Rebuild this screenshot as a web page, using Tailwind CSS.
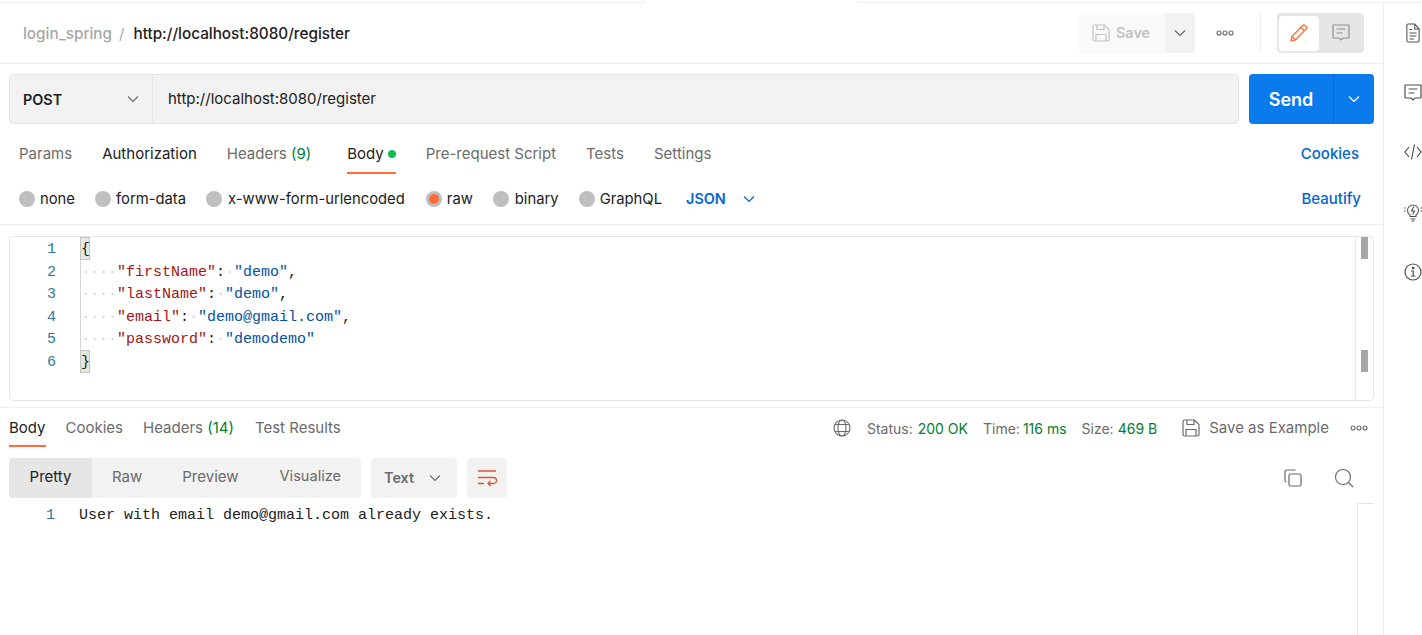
<!DOCTYPE html>
<html lang="en">
<head>
  <meta charset="UTF-8"/>
  <meta name="viewport" content="width=device-width, initial-scale=1.0"/>
  <title>login_spring | Postman</title>
  <script src="https://cdn.jsdelivr.net/npm/@tailwindcss/browser@4"></script>
</head>
<body class="h-[635px] w-[1422px] overflow-hidden bg-white font-['Inter',sans-serif] text-[15px] text-[#6b6b6b]">
  <!-- tab strip remnant -->
  <div class="flex h-[3px]">
    <div class="w-[643px] border-b border-[#ededed]"></div>
    <div class="w-[216px] border-x border-[#ededed]"></div>
    <div class="flex-1 border-b border-[#ededed]"></div>
  </div>

  <div class="flex h-[632px]">
    <main class="flex w-[1383px] flex-col">
      <!-- title row -->
      <header class="flex h-[61px] items-center border-b border-[#ededed] pl-[23px] pr-[19px]">
        <span class="pt-[2px] text-[15.300px] font-medium text-[#a6a6a6]">login_spring</span>
        <span class="ml-[7px] pt-[2px] text-[#a6a6a6]">/</span>
        <span class="ml-[9px] pt-[2px] text-[15.300px] font-medium text-[#212121]">http://localhost:8080/register</span>
        <div class="ml-auto flex h-10 items-center">
          <button class="flex h-10 w-[86px] items-center gap-[6px] rounded-l-[4px] bg-[#f9f9f9] pl-[13px] text-[14.400px] font-semibold text-[#c2c2c2]">
            <svg class="h-[18px] w-[18px]" viewBox="0 0 18 18" fill="none" stroke="#c2c2c2" stroke-width="1.200"><path d="M1 2.500A1.500 1.500 0 0 1 2.500 1h10L17 5.500v10a1.500 1.500 0 0 1-1.500 1.500h-13A1.500 1.500 0 0 1 1 15.500z"/><path d="M5 1v4.500h7V1M4 17v-6.500h10V17"/></svg>
            Save
          </button>
          <button class="flex h-10 w-[30px] items-center justify-center rounded-r-[4px] bg-[#f2f2f2]">
            <svg class="h-3 w-3" viewBox="0 0 12 12" fill="none" stroke="#6b6b6b" stroke-width="1.200"><path d="M1 3.500l5 5 5-5"/></svg>
          </button>
          <svg class="ml-[21px] h-[8px] w-[18px]" viewBox="0 0 18 8" fill="none" stroke="#6b6b6b" stroke-width="1.100"><circle cx="3" cy="4" r="2"/><circle cx="9" cy="4" r="2"/><circle cx="15" cy="4" r="2"/></svg>
          <div class="ml-[26px] h-10 w-px bg-[#ededed]"></div>
          <div class="ml-[16px] flex h-10 w-[87px] items-center rounded-[4px] bg-[#e6e6e6] pl-[2px]">
            <div class="flex h-[35px] w-[40px] items-center justify-center rounded-[4px] bg-white">
              <svg class="h-[18px] w-[18px]" viewBox="0 0 18 18" fill="none" stroke="#ff6c37" stroke-width="1.300"><path d="M1 17l1-4.500L12.800 1.500a1.500 1.500 0 0 1 2.200 0l1.200 1.200a1.500 1.500 0 0 1 0 2.100L5.500 16z"/><path d="M11 3.500l3.500 3.500M2 12.500l3.500 3.500"/></svg>
            </div>
            <div class="flex w-[43px] justify-center">
              <svg class="h-[18px] w-[18px]" viewBox="0 0 18 18" fill="none" stroke="#8f8f8f" stroke-width="1.200"><path d="M1.500 1h15a.5.5 0 0 1 .5.500v12a.5.5 0 0 1-.5.500H11l-2 2-2-2H1.500a.5.5 0 0 1-.5-.5v-12a.5.5 0 0 1 .5-.5z"/><path d="M4.500 5h9M4.500 9h6"/></svg>
            </div>
          </div>
        </div>
      </header>

      <!-- url bar -->
      <div class="mt-[10px] flex h-[50px] pl-[9px] pr-[9px]">
        <div class="flex flex-1 rounded-[4px] border border-[#e6e6e6] bg-[#f2f2f2]">
          <div class="flex w-[143px] items-center justify-between border-r border-[#e6e6e6] pl-[13px] pr-[13px]">
            <span class="pt-[1px] text-[14.400px] font-semibold text-[#212121]">POST</span>
            <svg class="h-3 w-3" viewBox="0 0 12 12" fill="none" stroke="#6b6b6b" stroke-width="1.100"><path d="M1 3.500l5 5 5-5"/></svg>
          </div>
          <div class="flex items-center pl-[15px] text-[#212121]">http://localhost:8080/register</div>
        </div>
        <div class="ml-[10px] flex w-[125px] rounded-[4px] bg-[#097bed] text-white">
          <div class="flex w-[85px] items-center justify-center border-r border-[#0265d2] text-[18px] font-semibold">Send</div>
          <div class="flex flex-1 items-center justify-center">
            <svg class="h-3 w-3" viewBox="0 0 12 12" fill="none" stroke="#ffffff" stroke-width="1.200"><path d="M1 3.500l5 5 5-5"/></svg>
          </div>
        </div>
      </div>

      <!-- request tabs -->
      <nav class="mt-[13px] flex h-[37px] gap-[30px] pl-[19px] pr-[24px]">
        <span class="pt-[6px]">Params</span>
        <span class="pt-[6px] text-[#212121]">Authorization</span>
        <span class="pt-[6px]">Headers <span class="text-[#007f31]">(9)</span></span>
        <span class="ml-[6px] flex items-start gap-[4px] border-b-2 border-[#ff6c37] pt-[6px] text-[#212121]">Body <span class="mt-[7px] h-2 w-2 rounded-full bg-[#0cbb52]"></span></span>
        <span class="pt-[6px]">Pre-request Script</span>
        <span class="pt-[6px]">Tests</span>
        <span class="pt-[6px]">Settings</span>
        <span class="ml-auto pt-[6px] font-medium text-[#0265d2]">Cookies</span>
      </nav>

      <!-- body type -->
      <div class="flex h-[51px] items-center border-b border-[#ededed] pl-[19px] pr-[22px] text-[14.800px] text-[#212121]">
        <span class="h-4 w-4 rounded-full bg-[#bfbfbf]"></span><span class="ml-[5px] pt-[1px]">none</span>
        <span class="ml-[20px] h-4 w-4 rounded-full bg-[#bfbfbf]"></span><span class="ml-[5px] pt-[1px]">form-data</span>
        <span class="ml-[20px] h-4 w-4 rounded-full bg-[#bfbfbf]"></span><span class="ml-[6px] pt-[1px]">x-www-form-urlencoded</span>
        <span class="ml-[21px] h-4 w-4 rounded-full border-[3px] border-[#bfbfbf] bg-[#ff6c37]"></span><span class="ml-[5px] pt-[1px]">raw</span>
        <span class="ml-[20px] h-4 w-4 rounded-full bg-[#bfbfbf]"></span><span class="ml-[6px] pt-[1px]">binary</span>
        <span class="ml-[20px] h-4 w-4 rounded-full bg-[#bfbfbf]"></span><span class="ml-[5px] pt-[1px]">GraphQL</span>
        <span class="ml-[24px] text-[14.400px] font-semibold text-[#0265d2]">JSON</span>
        <svg class="ml-[17px] h-3 w-3" viewBox="0 0 12 12" fill="none" stroke="#0265d2" stroke-width="1.200"><path d="M1 3.500l5 5 5-5"/></svg>
        <span class="ml-auto text-[15px] font-medium text-[#0265d2]">Beautify</span>
      </div>

      <!-- editor -->
      <div class="mt-[11px] mx-[9px] flex h-[165px] rounded-[4px] border border-[#e6e6e6] font-['Liberation_Mono',monospace] text-[15px] leading-[26.500px]">
        <div class="w-[46px] shrink-0 text-right text-[#2b7a9c]">
          <div class="h-[22.500px]">1</div><div class="h-[22.500px]">2</div><div class="h-[22.500px]">3</div><div class="h-[22.500px]">4</div><div class="h-[22.500px]">5</div><div class="h-[22.500px]">6</div>
        </div>
        <div class="ml-[24px] h-[135px] w-[1275px] border-l border-[#d3d3d3] text-[#212121]">
          <div class="h-[22.500px]"><span class="-ml-px inline-block h-[23px] w-[10px] border border-[#c5c5c5] bg-[#e3e8e0] align-top leading-[24px]">{</span></div>
          <div class="h-[22.500px] whitespace-pre"><span class="text-[#d3d3d3]">····</span><span class="text-[#a31515]">"firstName"</span>:<span class="text-[#d3d3d3]">·</span><span class="text-[#0451a5]">"demo"</span>,</div>
          <div class="h-[22.500px] whitespace-pre"><span class="text-[#d3d3d3]">····</span><span class="text-[#a31515]">"lastName"</span>:<span class="text-[#d3d3d3]">·</span><span class="text-[#0451a5]">"demo"</span>,</div>
          <div class="h-[22.500px] whitespace-pre"><span class="text-[#d3d3d3]">····</span><span class="text-[#a31515]">"email"</span>:<span class="text-[#d3d3d3]">·</span><span class="text-[#0451a5]">"demo@gmail.com"</span>,</div>
          <div class="h-[22.500px] whitespace-pre"><span class="text-[#d3d3d3]">····</span><span class="text-[#a31515]">"password"</span>:<span class="text-[#d3d3d3]">·</span><span class="text-[#0451a5]">"demodemo"</span></div>
          <div class="h-[22.500px]"><span class="-ml-px inline-block h-[23px] w-[10px] border border-[#c5c5c5] bg-[#e3e8e0] align-top leading-[24px]">}</span></div>
        </div>
        <div class="relative ml-auto w-[18px] border-l border-[#e6e6e6]">
          <div class="absolute left-[5px] top-0 h-[22px] w-[7px] bg-[#a6a6a6]"></div>
          <div class="absolute left-[5px] top-[113px] h-[22px] w-[7px] bg-[#a6a6a6]"></div>
        </div>
      </div>

      <div class="mt-[6px] border-t border-[#ededed]"></div>

      <!-- response tabs -->
      <div class="flex h-[39px] pl-[9px] pr-[15px]">
        <div class="flex gap-[20px]">
          <span class="h-[39px] border-b-2 border-[#ff6c37] pt-[9px] text-[#212121]">Body</span>
          <span class="pt-[9px]">Cookies</span>
          <span class="pt-[9px]">Headers <span class="text-[#007f31]">(14)</span></span>
          <span class="ml-[1px] pt-[9px]">Test Results</span>
        </div>
        <div class="ml-auto flex items-center pt-[1px] text-[14px]">
          <svg class="h-[18px] w-[18px]" viewBox="0 0 18 18" fill="none" stroke="#6b6b6b" stroke-width="1.100"><circle cx="9" cy="9" r="8"/><ellipse cx="9" cy="9" rx="4" ry="8"/><path d="M2 5.500h14M2 12.500h14"/></svg>
          <span class="ml-[16px]">Status:</span><span class="ml-[5px] text-[#007f31]">200 OK</span>
          <span class="ml-[15px]">Time:</span><span class="ml-[3px] text-[#007f31]">116 ms</span>
          <span class="ml-[15px]">Size:</span><span class="ml-[4px] text-[#007f31]">469 B</span>
          <svg class="ml-[25px] h-[18px] w-[18px]" viewBox="0 0 18 18" fill="none" stroke="#6b6b6b" stroke-width="1.200"><path d="M1 2.500A1.500 1.500 0 0 1 2.500 1h10L17 5.500v10a1.500 1.500 0 0 1-1.500 1.500h-13A1.500 1.500 0 0 1 1 15.500z"/><path d="M5 1v4.500h7V1M4 17v-6.500h10V17"/></svg>
          <span class="ml-[9px] text-[15px]">Save as Example</span>
          <svg class="ml-[21px] h-[8px] w-[18px]" viewBox="0 0 18 8" fill="none" stroke="#6b6b6b" stroke-width="1.100"><circle cx="3" cy="4" r="2"/><circle cx="9" cy="4" r="2"/><circle cx="15" cy="4" r="2"/></svg>
        </div>
      </div>

      <!-- response toolbar -->
      <div class="mt-[11px] flex h-10 items-stretch pl-[9px] pr-[29px]">
        <div class="flex w-[352px] rounded-[4px] bg-[#f2f2f2]">
          <span class="flex w-[83px] items-center justify-center rounded-l-[4px] bg-[#e6e6e6] pb-[2px] text-[#212121]">Pretty</span>
          <span class="ml-[20px] flex items-center pb-[2px]">Raw</span>
          <span class="ml-[40px] flex items-center pb-[2px]">Preview</span>
          <span class="ml-[41px] flex items-center pb-[2px] text-[14.600px]">Visualize</span>
        </div>
        <div class="ml-[10px] flex w-[86px] items-center justify-between rounded-[4px] bg-[#f2f2f2] pl-[13px] pr-[16px] text-[14.400px] font-semibold">
          Text
          <svg class="h-3 w-3" viewBox="0 0 12 12" fill="none" stroke="#6b6b6b" stroke-width="1.100"><path d="M1 3.500l5 5 5-5"/></svg>
        </div>
        <div class="ml-[10px] flex w-10 items-center justify-center rounded-[4px] bg-[#f2f2f2]">
          <svg class="h-[18px] w-[20px]" viewBox="0 0 20 18" fill="none" stroke="#e0552a" stroke-width="1.300"><path d="M1 2h18M1 8.500h15.500a2.800 2.800 0 0 1 0 6H11M13.500 12L11 14.500 13.500 17M1 14.500h6"/></svg>
        </div>
        <svg class="ml-auto mr-[32px] h-[18px] w-[18px] self-center" viewBox="0 0 18 18" fill="none" stroke="#6b6b6b" stroke-width="1.200"><rect x="5" y="5" width="12" height="12" rx="1.500"/><path d="M2.500 13A1.500 1.500 0 0 1 1 11.500V3a2 2 0 0 1 2-2h8.500"/></svg>
        <svg class="h-5 w-5 self-center" viewBox="0 0 20 20" fill="none" stroke="#6b6b6b" stroke-width="1.200"><circle cx="9" cy="9" r="7.500"/><path d="M14.500 14.500L19 19"/></svg>
      </div>

      <!-- response body -->
      <div class="mt-[5px] flex flex-1 font-['Liberation_Mono',monospace] text-[15px] leading-[26.500px] text-[#212121]">
        <span class="w-[55px] text-right text-[#2b7a9c]">1</span>
        <span class="ml-[24px]">User with email demo@gmail.com already exists.</span>
        <div class="ml-auto mr-[9px] w-[17px] border-l border-t border-[#e6e6e6]"></div>
      </div>
    </main>

    <!-- right sidebar -->
    <aside class="flex-1 border-l border-[#ededed] text-[#6b6b6b]">
      <div class="flex h-[59.700px] items-center justify-center pl-[20px]">
        <svg class="h-5 w-[14px] shrink-0" viewBox="0 0 16 20" preserveAspectRatio="none" fill="none" stroke="#505050" stroke-width="1.200"><path d="M1 2.500A1.500 1.500 0 0 1 2.500 1H10l5 5v11.500a1.500 1.500 0 0 1-1.500 1.500h-11A1.500 1.500 0 0 1 1 17.500z"/><path d="M10 1v5h5M4 6.500h3M4 10h8M4 13h8M4 16h5"/></svg>
      </div>
      <div class="flex h-[59.700px] items-center justify-center pl-[20px]">
        <svg class="h-[18px] w-[18px] shrink-0" viewBox="0 0 18 18" fill="none" stroke="#505050" stroke-width="1.200"><path d="M1.500 1h15a.5.5 0 0 1 .5.500v12a.5.5 0 0 1-.5.500H11l-2 2-2-2H1.500a.5.5 0 0 1-.5-.5v-12a.5.5 0 0 1 .5-.5z"/><path d="M4.500 5h9M4.500 9h6"/></svg>
      </div>
      <div class="flex h-[59.700px] items-center justify-center pl-[20px]">
        <svg class="h-[18px] w-[18px] shrink-0" viewBox="0 0 18 18" fill="none" stroke="#505050" stroke-width="1.200"><path d="M5 4L1 9l4 5M13 4l4 5-4 5M10.500 1.500L7.500 16.500"/></svg>
      </div>
      <div class="flex h-[59.700px] items-center justify-center pl-[20px]">
        <svg class="h-5 w-[18px] shrink-0" viewBox="0 0 18 20" fill="none" stroke="#505050" stroke-width="1.100"><path d="M6 14.500V13c-1.500-1-2.500-2.500-2.500-4.500a5.500 5.500 0 0 1 11 0c0 2-1 3.500-2.500 4.500v1.500zM6.500 17h5M7.500 19h3M9.800 4.500L7.500 9h3L8.500 12.500M0 6h1.500M0 9h1.500M16.500 6H18M16.500 9H18"/></svg>
      </div>
      <div class="flex h-[59.700px] items-center justify-center pl-[20px]">
        <svg class="h-[18px] w-[18px] shrink-0" viewBox="0 0 18 18" fill="none" stroke="#505050" stroke-width="1.200"><circle cx="9" cy="9" r="8"/><path d="M7 8h2.200v5M7 13h4.500M8.500 4.500h1.200v1.200H8.500z"/></svg>
      </div>
    </aside>
  </div>
</body>
</html>
